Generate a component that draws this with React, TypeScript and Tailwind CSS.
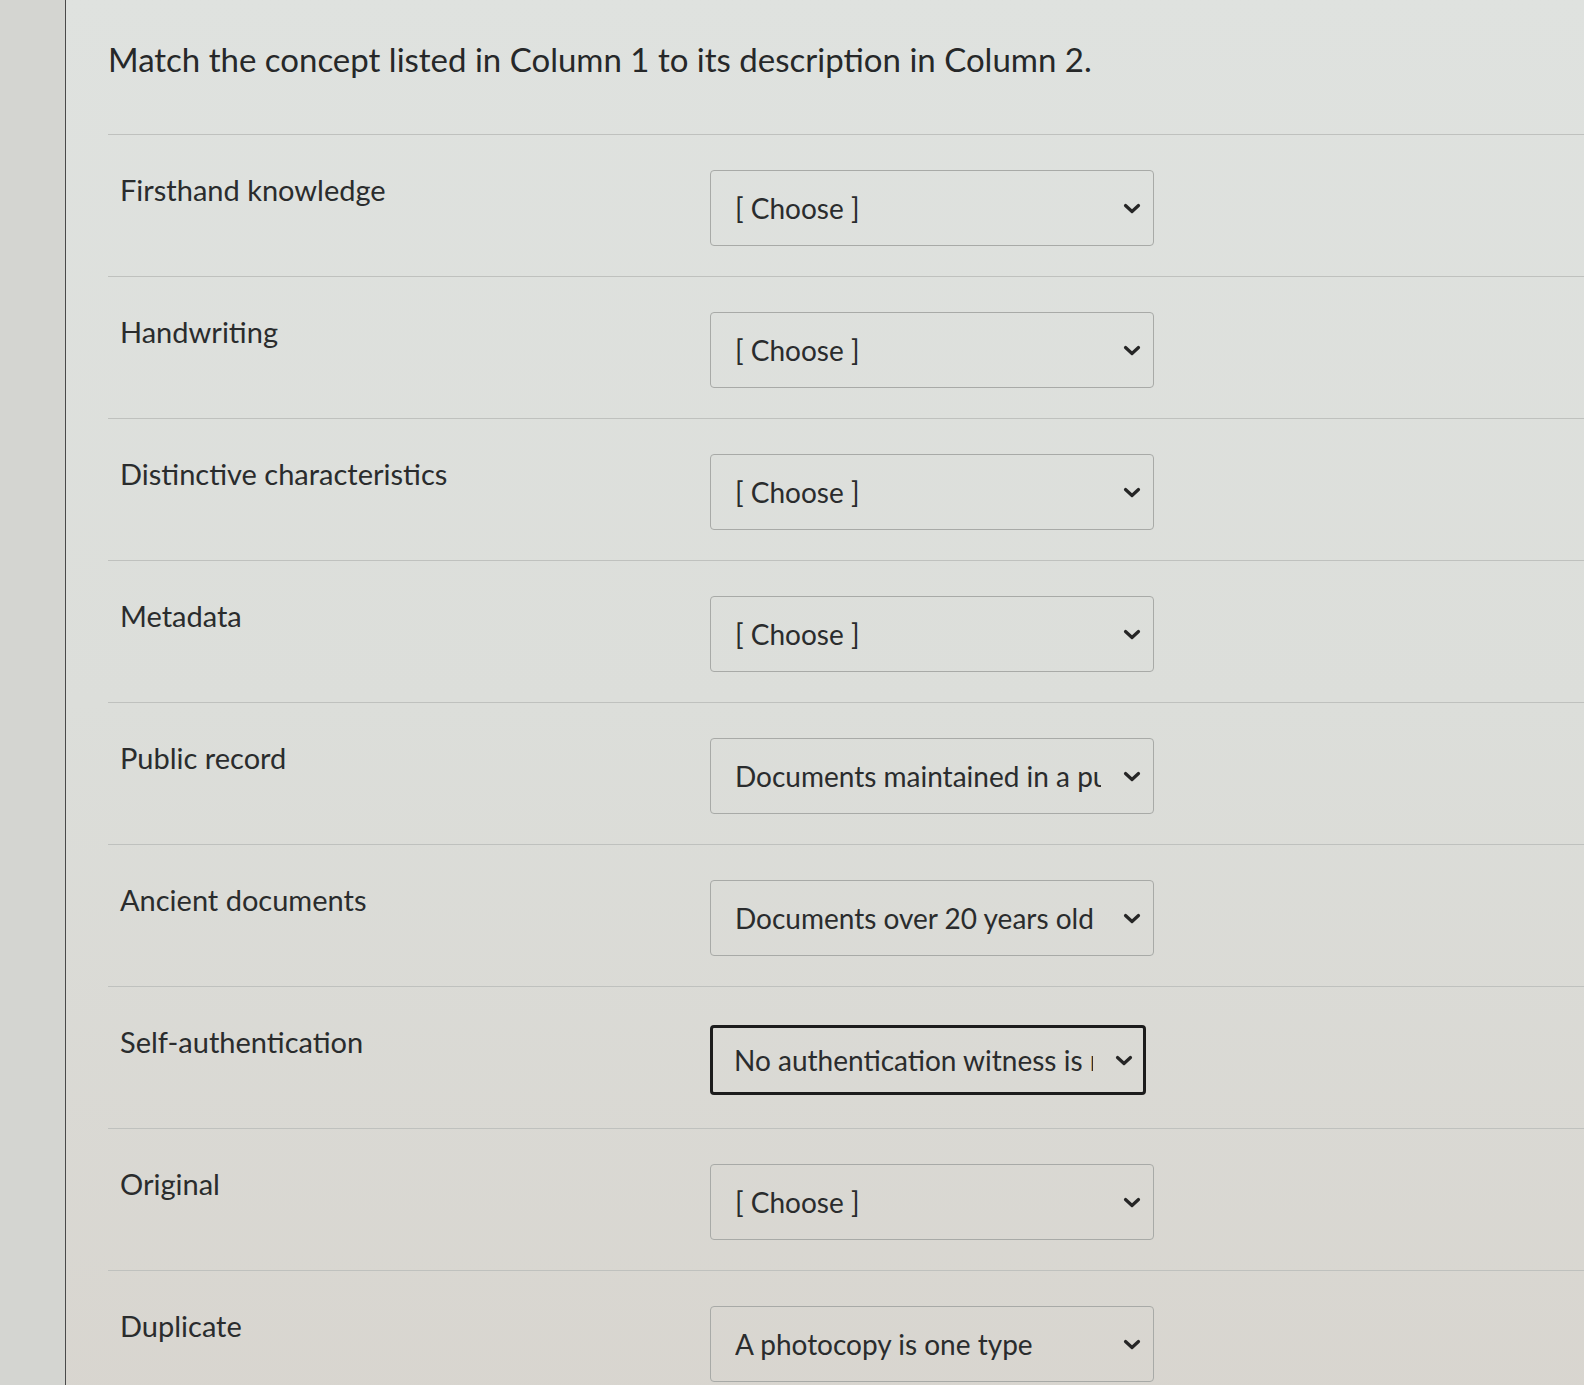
import React from 'react';

interface MatchRow {
  concept: string;
  answer: string | null;
  focused?: boolean;
}

const rows: MatchRow[] = [
  { concept: 'Firsthand knowledge', answer: null },
  { concept: 'Handwriting', answer: null },
  { concept: 'Distinctive characteristics', answer: null },
  { concept: 'Metadata', answer: null },
  { concept: 'Public record', answer: 'Documents maintained in a public office' },
  { concept: 'Ancient documents', answer: 'Documents over 20 years old' },
  { concept: 'Self-authentication', answer: 'No authentication witness is needed', focused: true },
  { concept: 'Original', answer: null },
  { concept: 'Duplicate', answer: 'A photocopy is one type' },
];

const Chevron = () => (
  <svg width="18" height="11" viewBox="0 0 18 11" className="shrink-0">
    <path d="M2.5 2.5 L9 8.5 L15.5 2.5" fill="none" stroke="#262626" strokeWidth="3.2" strokeLinecap="round" strokeLinejoin="round" />
  </svg>
);

const AnswerSelect: React.FC<{ value: string | null; focused?: boolean }> = ({ value, focused }) => (
  <div
    className={
      focused
        ? 'my-[3px] flex h-[70px] w-[436px] items-center rounded-[4px] border-[3px] border-[#1c1c1c] pl-[21px] pr-[10px]'
        : 'flex h-[76px] w-[444px] items-center rounded-[4px] border border-[#a8aaa7] pl-[24px] pr-[12px]'
    }
  >
    <span className="mr-[22px] flex-1 overflow-hidden whitespace-nowrap text-[28px] text-[#2a2c2d]">
      {value ?? '[ Choose ]'}
    </span>
    <Chevron />
  </div>
);

export default function App() {
  return (
    <div
      className="flex min-h-[1385px] w-full bg-gradient-to-b from-[#dfe2df] via-[#dcdeda] to-[#d8d5cf]"
      style={{ fontFamily: 'Lato, "Open Sans", sans-serif' }}
    >
      <div className="w-[66px] shrink-0 border-r border-[#4a4a4a] bg-[#d4d5d1]" />
      <div className="flex-1 pl-[42px] pt-[37px]">
        <h1 className="text-[33px] font-normal leading-[44px] text-[#262829]">
          Match the concept listed in Column 1 to its description in Column 2.
        </h1>
        <div className="mt-[53px]">
          {rows.map((row) => (
            <div key={row.concept} className="flex border-t border-[#bfc1be] pb-[30px] pl-[12px] pt-[35px]">
              <div className="w-[590px] shrink-0 pt-[1px] text-[29px] leading-[38px] text-[#2a2c2d]">{row.concept}</div>
              <AnswerSelect value={row.answer} focused={row.focused} />
            </div>
          ))}
        </div>
      </div>
    </div>
  );
}
